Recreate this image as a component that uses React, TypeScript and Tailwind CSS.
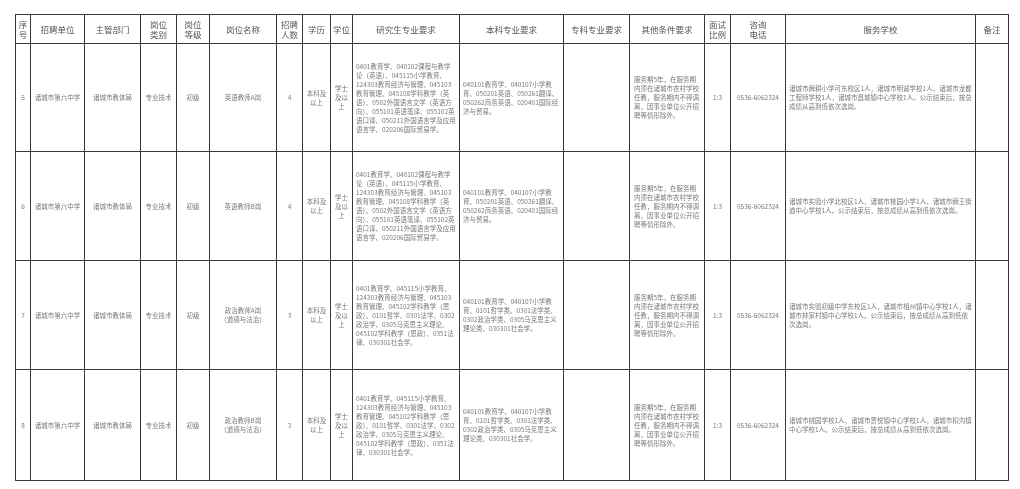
import React from "react";

interface Post {
  no: string;
  unit: string;
  dept: string;
  kind: string;
  level: string;
  name: string[];
  count: string;
  edu: string[];
  degree: string[];
  grad: string;
  bachelor: string;
  other: string;
  ratio: string;
  phone: string;
  schools: string;
  h: string;
}

const OTHER =
  "服务期5年，在服务期内须在诸城市农村学校任教，服务期内不得调离，因事业单位公开招聘等情形除外。";

const posts: Post[] = [
  {
    no: "5",
    unit: "诸城市第六中学",
    dept: "诸城市教体局",
    kind: "专业技术",
    level: "初级",
    name: ["英语教师A岗"],
    count: "4",
    edu: ["本科及", "以上"],
    degree: ["学士", "及以", "上"],
    grad:
      "0401教育学、040102课程与教学论（英语）、045115小学教育、124303教育经济与管理、045103教育管理、045108学科教学（英语）、0502外国语言文学（英语方向）、055101英语笔译、055102英语口译、050211外国语言学及应用语言学、020206国际贸易学。",
    bachelor:
      "040101教育学、040107小学教育、050201英语、050261翻译、050262商务英语、020401国际经济与贸易。",
    other: OTHER,
    ratio: "1:3",
    phone: "0536-6062324",
    schools:
      "诸城市舜耕小学可东校区1人，诸城市明诚学校1人，诸城市龙都工程师学校1人，诸城市昌城镇中心学校1人。公示结束后，按总成绩从高到低依次选岗。",
    h: "h-[108px]",
  },
  {
    no: "6",
    unit: "诸城市第六中学",
    dept: "诸城市教体局",
    kind: "专业技术",
    level: "初级",
    name: ["英语教师B岗"],
    count: "4",
    edu: ["本科及", "以上"],
    degree: ["学士", "及以", "上"],
    grad:
      "0401教育学、040102课程与教学论（英语）、045115小学教育、124303教育经济与管理、045103教育管理、045108学科教学（英语）、0502外国语言文学（英语方向）、055101英语笔译、055102英语口译、050211外国语言学及应用语言学、020206国际贸易学。",
    bachelor:
      "040101教育学、040107小学教育、050201英语、050261翻译、050262商务英语、020401国际经济与贸易。",
    other: OTHER,
    ratio: "1:3",
    phone: "0536-6062324",
    schools:
      "诸城市实验小学北校区1人，诸城市桃园小学1人，诸城市舜王街道中心学校1人。公示结束后，按总成绩从高到低依次选岗。",
    h: "h-[109px]",
  },
  {
    no: "7",
    unit: "诸城市第六中学",
    dept: "诸城市教体局",
    kind: "专业技术",
    level: "初级",
    name: ["政治教师A岗", "（道德与法治）"],
    count: "3",
    edu: ["本科及", "以上"],
    degree: ["学士", "及以", "上"],
    grad:
      "0401教育学、045115小学教育、124303教育经济与管理、045103教育管理、045102学科教学（思政）、0101哲学、0301法学、0302政治学、0305马克思主义理论、045102学科教学（思政）、0351法律、030301社会学。",
    bachelor:
      "040101教育学、040107小学教育、0101哲学类、0301法学类、0302政治学类、0305马克思主义理论类、030301社会学。",
    other: OTHER,
    ratio: "1:3",
    phone: "0536-6062324",
    schools:
      "诸城市实验初级中学东校区1人，诸城市相州镇中心学校1人，诸城市林家村镇中心学校1人。公示结束后，按总成绩从高到低依次选岗。",
    h: "h-[109px]",
  },
  {
    no: "8",
    unit: "诸城市第六中学",
    dept: "诸城市教体局",
    kind: "专业技术",
    level: "初级",
    name: ["政治教师B岗", "（道德与法治）"],
    count: "3",
    edu: ["本科及", "以上"],
    degree: ["学士", "及以", "上"],
    grad:
      "0401教育学、045115小学教育、124303教育经济与管理、045103教育管理、045102学科教学（思政）、0101哲学、0301法学、0302政治学、0305马克思主义理论、045102学科教学（思政）、0351法律、030301社会学。",
    bachelor:
      "040101教育学、040107小学教育、0101哲学类、0301法学类、0302政治学类、0305马克思主义理论类、030301社会学。",
    other: OTHER,
    ratio: "1:3",
    phone: "0536-6062324",
    schools:
      "诸城市桃园学校1人，诸城市贾悦镇中心学校1人，诸城市枳沟镇中心学校1人。公示结束后，按总成绩从高到低依次选岗。",
    h: "h-[111px]",
  },
];

const head = [
  ["序", "号"],
  ["招聘单位"],
  ["主管部门"],
  ["岗位", "类别"],
  ["岗位", "等级"],
  ["岗位名称"],
  ["招聘", "人数"],
  ["学历"],
  ["学位"],
  ["研究生专业要求"],
  ["本科专业要求"],
  ["专科专业要求"],
  ["其他条件要求"],
  ["面试", "比例"],
  ["咨询", "电话"],
  ["服务学校"],
  ["备注"],
];

const cols = [
  "w-[15px]", "w-[54px]", "w-[56px]", "w-[36px]", "w-[33px]", "w-[67px]", "w-[26px]",
  "w-[28px]", "w-[22px]", "w-[107px]", "w-[104px]", "w-[66px]", "w-[75px]", "w-[26px]",
  "w-[55px]", "w-[190px]", "w-[33px]",
];

const cell = "border border-[#3a3a3a] align-middle p-0";
const txt = "text-[6.5px] leading-[9px] text-[#7a7a7a] blur-[0.3px]";

function Lines({ lines }: { lines: string[] }) {
  return (
    <>
      {lines.map((l, i) => (
        <div key={i}>{l}</div>
      ))}
    </>
  );
}

export default function App() {
  return (
    <div
      className="w-[1020px] h-[489px] bg-white pl-[15px] pt-[14px] overflow-hidden"
      style={{ fontFamily: '"Noto Sans CJK SC", "Noto Sans", sans-serif' }}
    >
      <table className="table-fixed border-collapse w-[993px] border-[1.5px] border-[#333]">
        <colgroup>
          {cols.map((c, i) => (
            <col key={i} className={c} />
          ))}
        </colgroup>
        <thead>
          <tr className="h-[29px]">
            {head.map((h, i) => (
              <th
                key={i}
                className={`${cell} font-normal text-center text-[8.5px] leading-[10px] text-[#555] blur-[0.25px]`}
              >
                <Lines lines={h} />
              </th>
            ))}
          </tr>
        </thead>
        <tbody>
          {posts.map((p) => (
            <tr key={p.no} className={p.h}>
              <td className={`${cell} ${txt} text-center`}>{p.no}</td>
              <td className={`${cell} ${txt} text-center`}>{p.unit}</td>
              <td className={`${cell} ${txt} text-center`}>{p.dept}</td>
              <td className={`${cell} ${txt} text-center`}>{p.kind}</td>
              <td className={`${cell} ${txt} text-center`}>{p.level}</td>
              <td className={`${cell} ${txt} text-center`}>
                <Lines lines={p.name} />
              </td>
              <td className={`${cell} ${txt} text-center`}>{p.count}</td>
              <td className={`${cell} ${txt} text-center`}>
                <Lines lines={p.edu} />
              </td>
              <td className={`${cell} ${txt} text-center`}>
                <Lines lines={p.degree} />
              </td>
              <td className={`${cell} ${txt} px-[3px] text-left`}>{p.grad}</td>
              <td className={`${cell} ${txt} px-[3px] text-left`}>{p.bachelor}</td>
              <td className={cell}></td>
              <td className={`${cell} ${txt} px-[4px] text-left`}>{p.other}</td>
              <td className={`${cell} ${txt} text-center`}>{p.ratio}</td>
              <td className={`${cell} ${txt} text-center`}>{p.phone}</td>
              <td className={`${cell} ${txt} px-[3px] text-left`}>{p.schools}</td>
              <td className={cell}></td>
            </tr>
          ))}
        </tbody>
      </table>
    </div>
  );
}
